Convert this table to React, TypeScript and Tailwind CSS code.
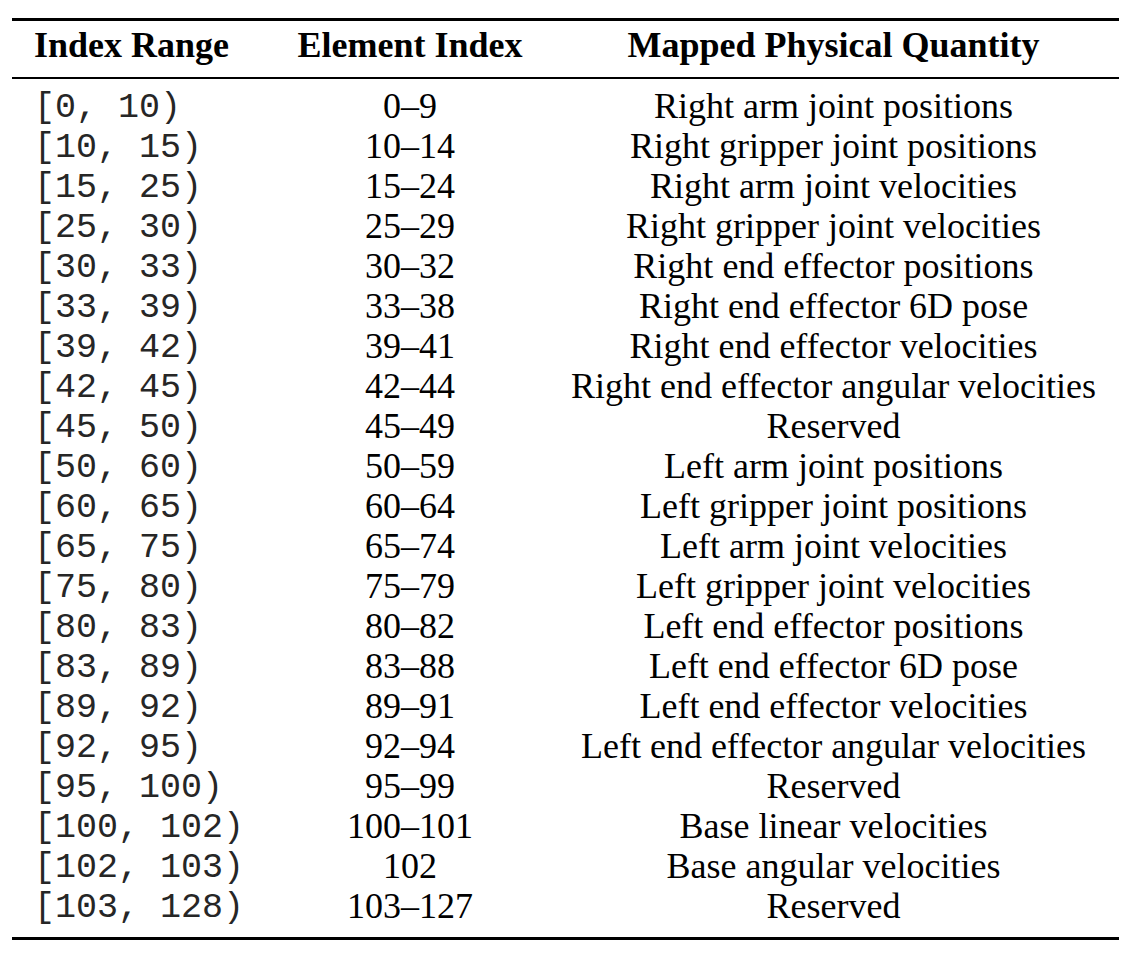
import React from "react";

const rows: [string, string, string][] = [
  ["[0, 10)", "0–9", "Right arm joint positions"],
  ["[10, 15)", "10–14", "Right gripper joint positions"],
  ["[15, 25)", "15–24", "Right arm joint velocities"],
  ["[25, 30)", "25–29", "Right gripper joint velocities"],
  ["[30, 33)", "30–32", "Right end effector positions"],
  ["[33, 39)", "33–38", "Right end effector 6D pose"],
  ["[39, 42)", "39–41", "Right end effector velocities"],
  ["[42, 45)", "42–44", "Right end effector angular velocities"],
  ["[45, 50)", "45–49", "Reserved"],
  ["[50, 60)", "50–59", "Left arm joint positions"],
  ["[60, 65)", "60–64", "Left gripper joint positions"],
  ["[65, 75)", "65–74", "Left arm joint velocities"],
  ["[75, 80)", "75–79", "Left gripper joint velocities"],
  ["[80, 83)", "80–82", "Left end effector positions"],
  ["[83, 89)", "83–88", "Left end effector 6D pose"],
  ["[89, 92)", "89–91", "Left end effector velocities"],
  ["[92, 95)", "92–94", "Left end effector angular velocities"],
  ["[95, 100)", "95–99", "Reserved"],
  ["[100, 102)", "100–101", "Base linear velocities"],
  ["[102, 103)", "102", "Base angular velocities"],
  ["[103, 128)", "103–127", "Reserved"],
];

const serif = "font-['Liberation_Serif','Times_New_Roman',serif]";

export default function App() {
  return (
    <div className={`min-h-[960px] w-[1144px] bg-white pt-[18px] pl-[12px] text-black ${serif}`}>
      <div className="w-[1107px]">
        <div className="h-[3px] bg-black" />
        <div className="grid h-[56px] grid-cols-[260px_276px_571px] items-start pt-[4px] text-[36px] font-bold leading-[40px]">
          <div className="pl-[22px]">Index Range</div>
          <div className="text-center">Element Index</div>
          <div className="text-center">Mapped Physical Quantity</div>
        </div>
        <div className="h-[2px] bg-black" />
        <div className="pt-[7px] pb-[11px]">
          {rows.map(([r, e, q]) => (
            <div key={r} className="grid h-[40px] grid-cols-[260px_276px_571px] text-[36px] leading-[40px]">
              <div className="whitespace-pre pl-[22px] pt-[2px] font-['Liberation_Mono','Courier_New',monospace] text-[35px] leading-[40px] text-[#262626]">
                {r}
              </div>
              <div className="text-center">{e}</div>
              <div className="text-center whitespace-nowrap">{q}</div>
            </div>
          ))}
        </div>
        <div className="h-[3px] bg-black" />
      </div>
    </div>
  );
}
